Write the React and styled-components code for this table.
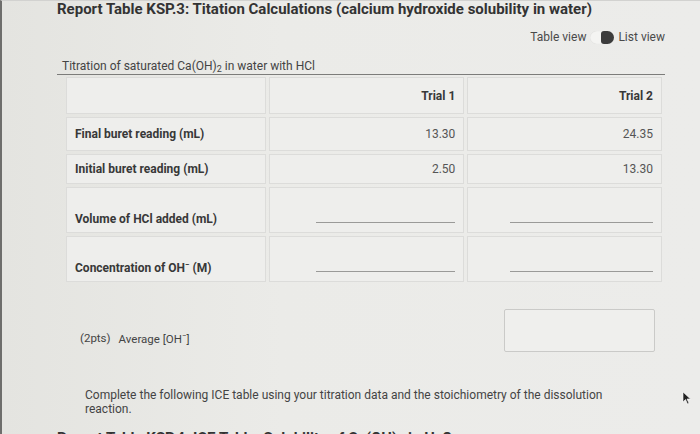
import React from 'react';
import styled, { createGlobalStyle } from 'styled-components';

const GlobalStyle = createGlobalStyle`
  html, body {
    margin: 0;
    padding: 0;
    background: #e6e6e2;
  }
  body {
    font-family: Roboto, "Liberation Sans", sans-serif;
    color: #3a3a3a;
  }
`;

const Page = styled.div`
  width: 700px;
  height: 434px;
  overflow: hidden;
  position: relative;
  box-sizing: border-box;
  border-left: 2px solid #6e6e6c;
  border-top: 1px solid #d2d2d0;
  background: linear-gradient(90deg, #e4e4e0 0%, #ebebe8 40%, #ececea 100%);
  padding: 0 35px 0 55px;
`;

const Title = styled.h1`
  margin: 0;
  font-size: 15px;
  line-height: 16px;
  font-weight: 700;
  color: #333;
`;

const ViewBar = styled.div`
  display: flex;
  justify-content: flex-end;
  align-items: center;
  gap: 4px;
  margin-top: 13px;
  font-size: 12px;
  color: #4a4a4a;
`;

const Toggle = styled.span`
  width: 24px;
  height: 13px;
  border-radius: 7px;
  background: #f4f4f2;
  box-shadow: inset 0 0 1px rgba(0, 0, 0, 0.15);
  position: relative;
  &::after {
    content: '';
    position: absolute;
    right: 0;
    top: 0;
    width: 13px;
    height: 13px;
    border-radius: 3px 50% 50% 3px;
    background: #3c3c3c;
  }
`;

const Caption = styled.div`
  margin-top: 15px;
  padding: 0 0 1px 5px;
  font-size: 12px;
  color: #444;
  border-bottom: 1px solid #7c7c7a;
  sub {
    font-size: 9px;
    vertical-align: -2px;
    line-height: 0;
  }
`;

const Grid = styled.table`
  border-collapse: separate;
  border-spacing: 3px;
  margin: -1px 0 0 6px;
  table-layout: fixed;
`;

const Cell = styled.td`
  box-sizing: border-box;
  height: ${(p) => p.$h}px;
  width: ${(p) => p.$w}px;
  background: #eeeeec;
  border: 1px solid #dcdcda;
  padding: 0 8px ${(p) => (p.$low ? 6 : 0)}px;
  font-size: 12px;
  text-align: ${(p) => (p.$right ? 'right' : 'left')};
  font-weight: ${(p) => (p.$bold ? 700 : 400)};
  color: ${(p) => (p.$bold ? '#383838' : '#555')};
  vertical-align: ${(p) => (p.$low ? 'bottom' : 'middle')};
`;

const Blank = styled.div`
  margin: 0 0 3px ${(p) => p.$inset}px;
  border-bottom: 1px solid #9a9a98;
  height: 0;
`;

const AvgRow = styled.div`
  display: flex;
  align-items: center;
  justify-content: space-between;
  margin-top: 24px;
  padding: 0 10px 0 23px;
`;

const AvgLabel = styled.div`
  font-size: 11.5px;
  color: #444;
  display: flex;
  gap: 8px;
  padding-top: 16px;
`;

const AnswerBox = styled.div`
  width: 149px;
  height: 41px;
  border: 1px solid #cacac8;
  border-radius: 2px;
  background: #efefed;
`;

const Note = styled.p`
  margin: 36px 0 0 28px;
  width: 540px;
  font-size: 12px;
  line-height: 14px;
  color: #444;
`;

const NextTitle = styled.h2`
  margin: 13px 0 0 0;
  font-size: 15px;
  font-weight: 700;
  color: #333;
`;

const Cursor = styled.svg`
  position: absolute;
  left: 680px;
  top: 390px;
`;

const rows = [
  { label: 'Final buret reading (mL)', a: '13.30', b: '24.35', h: 34 },
  { label: 'Initial buret reading (mL)', a: '2.50', b: '13.30', h: 30 },
];

const blanks = [
  { label: 'Volume of HCl added (mL)', h: 46 },
  {
    label: (
      <>
        Concentration of OH<sup style={{ fontSize: 8 }}>−</sup> (M)
      </>
    ),
    h: 46,
  },
];

export default function App() {
  return (
    <>
      <GlobalStyle />
      <Page>
        <Title>Report Table KSP.3: Titation Calculations (calcium hydroxide solubility in water)</Title>
        <ViewBar>
          <span>Table view</span>
          <Toggle />
          <span>List view</span>
        </ViewBar>
        <Caption>
          Titration of saturated Ca(OH)<sub>2</sub> in water with HCl
        </Caption>
        <Grid>
          <tbody>
            <tr>
              <Cell $w={200} $h={37} />
              <Cell $w={196} $h={37} $right $bold>Trial 1</Cell>
              <Cell $w={195} $h={37} $right $bold>Trial 2</Cell>
            </tr>
            {rows.map((r) => (
              <tr key={r.label}>
                <Cell $h={r.h} $bold>{r.label}</Cell>
                <Cell $h={r.h} $right>{r.a}</Cell>
                <Cell $h={r.h} $right>{r.b}</Cell>
              </tr>
            ))}
            {blanks.map((r, i) => (
              <tr key={i}>
                <Cell $h={r.h} $bold $low>{r.label}</Cell>
                <Cell $h={r.h} $low>
                  <Blank $inset={38} />
                </Cell>
                <Cell $h={r.h} $low>
                  <Blank $inset={34} />
                </Cell>
              </tr>
            ))}
          </tbody>
        </Grid>
        <AvgRow>
          <AvgLabel>
            <span>(2pts)</span>
            <span>
              Average [OH<sup style={{ fontSize: 8 }}>−</sup>]
            </span>
          </AvgLabel>
          <AnswerBox />
        </AvgRow>
        <Note>
          Complete the following ICE table using your titration data and the stoichiometry of the dissolution
          reaction.
        </Note>
        <NextTitle>
          Report Table KSP.4: ICE Table: Solubility of Ca(OH)<sub>2</sub> in H<sub>2</sub>O
        </NextTitle>
        <Cursor width="10" height="14" viewBox="0 0 10 14">
          <path d="M1 1 L1 11 L3.5 8.5 L5.5 13 L7 12.3 L5 8 L8.5 8 Z" fill="#222" stroke="#fff" strokeWidth="0.6" />
        </Cursor>
      </Page>
    </>
  );
}
